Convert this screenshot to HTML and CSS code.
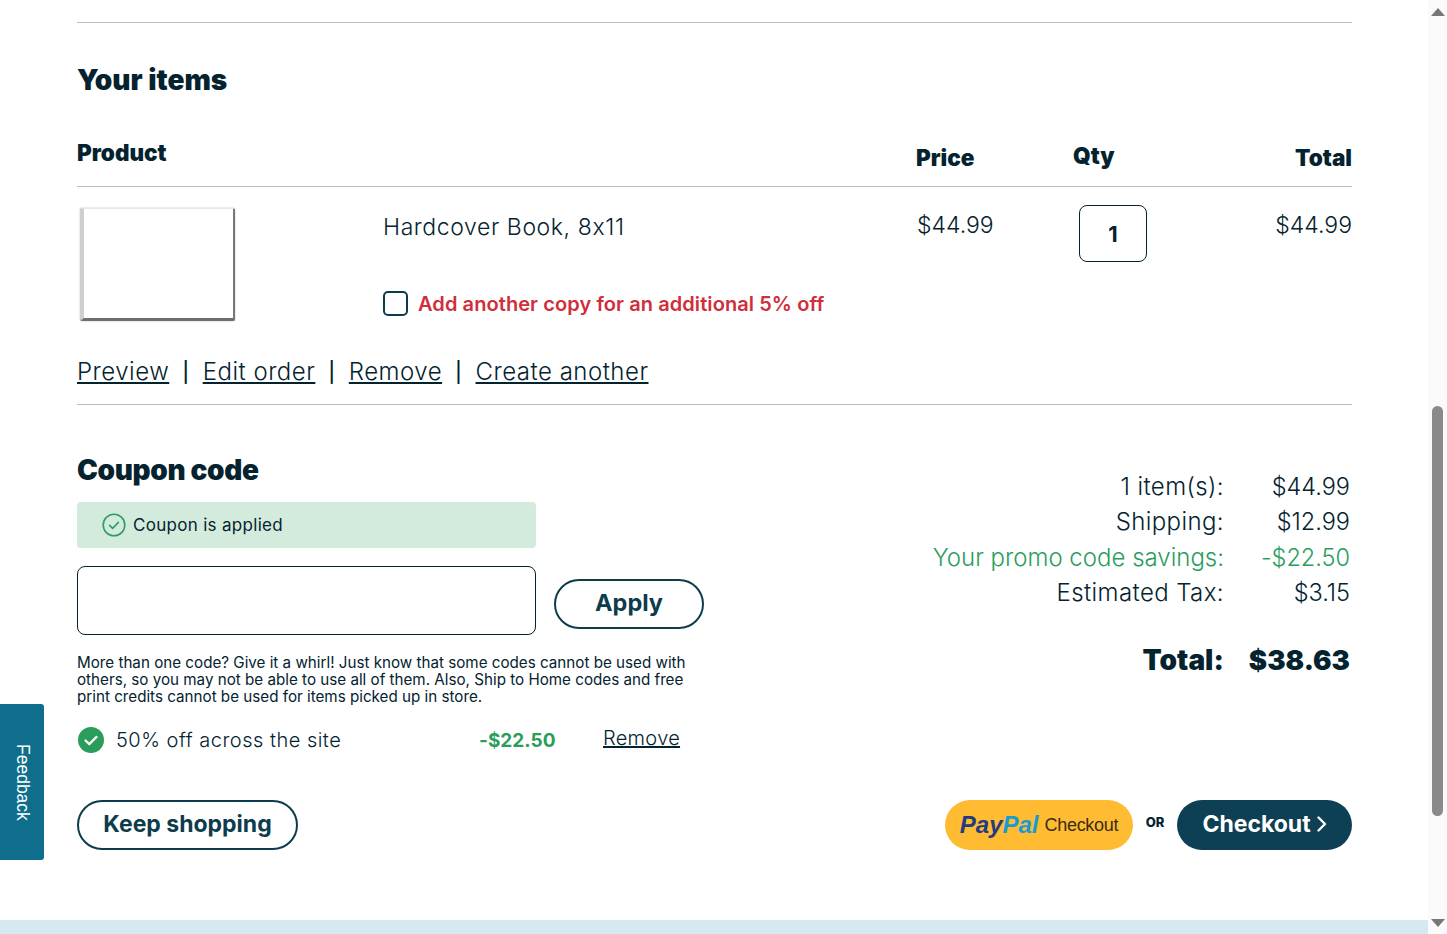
FILE: index.html
```html
<!DOCTYPE html>
<html lang="en">
<head>
    <meta charset="UTF-8">
    <meta name="viewport" content="width=device-width, initial-scale=1.0">
    <title>Your cart</title>
    <link rel="stylesheet" href="styles.css">
</head>
<body>
    <div class="page">
        <div class="content">
            <h2 class="items-title">Your items</h2>
            <div class="table-head">
                <div class="head-product">Product</div>
                <div class="head-price">Price</div>
                <div class="head-qty">Qty</div>
                <div class="head-total">Total</div>
            </div>
            <div class="item">
                <div class="item-image"></div>
                <div class="item-info">
                    <div class="item-name">Hardcover Book, 8x11</div>
                    <label class="upsell"><span class="checkbox"></span><span class="upsell-text">Add another copy for an additional 5% off</span></label>
                </div>
                <div class="item-price">$44.99</div>
                <div class="item-qty"><div class="qty-box">1</div></div>
                <div class="item-total">$44.99</div>
            </div>
            <div class="item-links">
                <a href="#">Preview</a><span class="sep">|</span><a href="#">Edit order</a><span class="sep">|</span><a href="#">Remove</a><span class="sep">|</span><a href="#">Create another</a>
            </div>
            <div class="summary">
                <div class="coupon">
                    <h2 class="coupon-title">Coupon code</h2>
                    <div class="coupon-alert">
                        <svg class="alert-icon" viewBox="0 0 24 24" width="24" height="24"><circle cx="12" cy="12" r="10.8" fill="none" stroke="#2f9e63" stroke-width="1.6"/><path d="M7.6 12.4l3 3 5.8-6" fill="none" stroke="#2f9e63" stroke-width="1.6" stroke-linecap="round" stroke-linejoin="round"/></svg>
                        Coupon is applied
                    </div>
                    <div class="coupon-form">
                        <div class="coupon-input"></div>
                        <button class="btn btn-outline btn-apply">Apply</button>
                    </div>
                    <p class="coupon-help">More than one code? Give it a whirl! Just know that some codes cannot be used with others, so you may not be able to use all of them. Also, Ship to Home codes and free print credits cannot be used for items picked up in store.</p>
                    <div class="applied">
                        <svg class="applied-icon" viewBox="0 0 26 26" width="26" height="26"><circle cx="13" cy="13" r="13" fill="#2a9d5c"/><path d="M7.5 13.5l3.8 3.6 7.2-7.2" fill="none" stroke="#fff" stroke-width="2.2" stroke-linecap="round" stroke-linejoin="round"/></svg>
                        <span class="applied-name">50% off across the site</span>
                        <span class="applied-amount">-$22.50</span>
                        <a class="applied-remove" href="#">Remove</a>
                    </div>
                </div>
                <div class="totals">
                    <div class="total-row"><span>1 item(s):</span><span class="amount">$44.99</span></div>
                    <div class="total-row"><span>Shipping:</span><span class="amount">$12.99</span></div>
                    <div class="total-row promo"><span>Your promo code savings:</span><span class="amount">-$22.50</span></div>
                    <div class="total-row"><span>Estimated Tax:</span><span class="amount">$3.15</span></div>
                    <div class="total-row grand"><span>Total:</span><span class="amount-grand">$38.63</span></div>
                </div>
            </div>
            <div class="actions">
                <button class="btn btn-outline btn-keep">Keep shopping</button>
                <div class="checkout-group">
                    <button class="btn-paypal"><span class="pp-dark">Pay</span><span class="pp-light">Pal</span><span class="pp-label">Checkout</span></button>
                    <span class="or">OR</span>
                    <button class="btn btn-checkout">Checkout<svg viewBox="0 0 10 16" width="10" height="16"><path d="M1.5 1.5L8 8l-6.5 6.5" fill="none" stroke="#fff" stroke-width="2.4" stroke-linecap="round" stroke-linejoin="round"/></svg></button>
                </div>
            </div>
        </div>
        <div class="footer-band"></div>
    </div>
    <div class="scrollbar">
        <svg class="arrow" viewBox="0 0 14 8" width="14" height="8"><path d="M7 0l7 8H0z" fill="#777"/></svg>
        <div class="track"><div class="thumb"></div></div>
        <svg class="arrow" viewBox="0 0 14 8" width="14" height="8"><path d="M0 0h14L7 8z" fill="#777"/></svg>
    </div>
    <div class="feedback">Feedback</div>
</body>
</html>
```

FILE: styles.css
```css
* {
    margin: 0;
    padding: 0;
    box-sizing: border-box;
}
body {
    display: flex;
    height: 100vh;
    overflow: hidden;
    background-color: #fff;
    color: #04232f;
    font-family: Inter, "Liberation Sans", sans-serif;
    font-feature-settings: "calt" 0;
}
button {
    font-family: inherit;
    font-feature-settings: inherit;
    cursor: pointer;
}
a {
    color: inherit;
}
.page {
    flex: 1;
    display: flex;
    flex-direction: column;
    justify-content: space-between;
}
.content {
    margin: 22px 76px 0 77px;
    border-top: 1px solid #bdbdbd;
}
.footer-band {
    height: 14px;
    background: #d6e9f0;
}
.items-title {
    margin-top: 38px;
    font-size: 28px;
    line-height: 38px;
    font-weight: 900;
}
.table-head {
    display: grid;
    grid-template-columns: 839px 157px 120px 1fr;
    height: 69px;
    margin-top: 19px;
    border-bottom: 1px solid #bdbdbd;
    font-size: 22.5px;
    line-height: 29px;
    font-weight: 900;
}
.head-product {
    padding-top: 20px;
}
.head-price {
    padding-top: 25px;
}
.head-qty {
    padding-top: 23px;
}
.head-total {
    padding-top: 25px;
    text-align: right;
}
.item {
    display: grid;
    grid-template-columns: 306px 534px 162px 70px 1fr;
    padding-top: 18px;
    height: 163px;
}
.item-image {
    width: 155px;
    height: 113px;
    margin: 3px 0 0 3px;
    background: #fff;
    border-top: 1px solid #e8e8e8;
    border-left: 4px solid #cfcfcf;
    border-right: 2px solid #777;
    border-bottom: 3px solid #6e6e6e;
    border-radius: 2px;
    box-shadow: 0 0 2px #bbb;
}
.item-name {
    font-size: 23px;
    line-height: 44px;
    font-weight: 300;
    letter-spacing: 0.6px;
}
.upsell {
    display: flex;
    align-items: center;
    gap: 10px;
    margin-top: 41px;
    color: #cf2e3a;
    font-size: 20px;
    font-weight: 600;
    letter-spacing: 0.08px;
}
.upsell-text {
    padding-top: 2px;
}
.checkbox {
    width: 25px;
    height: 25px;
    border: 2px solid #0d3c4c;
    border-radius: 5px;
}
.item-price {
    font-size: 23px;
    line-height: 40px;
    font-weight: 300;
}
.item-qty {
    display: flex;
}
.qty-box {
    width: 68px;
    height: 57px;
    display: flex;
    align-items: center;
    justify-content: center;
    border: 1px solid #04232f;
    border-radius: 8px;
    font-size: 22px;
    font-weight: 700;
}
.item-total {
    font-size: 23px;
    line-height: 40px;
    font-weight: 300;
    text-align: right;
}
.item-links {
    display: flex;
    gap: 13px;
    height: 55px;
    padding-top: 4px;
    border-bottom: 1px solid #bdbdbd;
    font-size: 24px;
    line-height: 36px;
    font-weight: 300;
    letter-spacing: 0.5px;
}
.sep {
    font-size: 20px;
    font-weight: 500;
}
.summary {
    display: flex;
    justify-content: space-between;
    padding-top: 45px;
}
.coupon {
    width: 627px;
}
.coupon-title {
    margin-top: 1px;
    margin-bottom: -1px;
    font-size: 28px;
    line-height: 38px;
    font-weight: 900;
    letter-spacing: -0.35px;
}
.coupon-alert {
    display: flex;
    align-items: center;
    gap: 7px;
    width: 459px;
    height: 46px;
    margin-top: 14px;
    padding-left: 25px;
    background: #d3ebdd;
    border-radius: 4px;
    font-size: 17px;
    letter-spacing: 0.3px;
}
.coupon-form {
    display: flex;
    gap: 18px;
    margin-top: 18px;
}
.coupon-input {
    width: 459px;
    height: 69px;
    border: 1px solid #04232f;
    border-radius: 8px;
}
.btn {
    border-radius: 25px;
    font-weight: 700;
}
.btn-outline {
    background: #fff;
    border: 2px solid #0d3c4c;
    color: #0d3c4c;
}
.btn-apply {
    width: 150px;
    height: 50px;
    margin-top: 13px;
    padding-bottom: 4px;
    font-size: 23.5px;
}
.coupon-help {
    margin-top: 19px;
    font-size: 15.2px;
    line-height: 17px;
}
.applied {
    display: flex;
    align-items: center;
    height: 30px;
    margin-top: 20px;
    margin-bottom: -1px;
    font-size: 20px;
    font-weight: 300;
}
.applied-icon {
    margin-left: 1px;
}
.applied-name {
    width: 363px;
    margin-left: 12px;
    letter-spacing: 0.5px;
}
.applied-amount {
    width: 124px;
    color: #2a9d5c;
    font-size: 19px;
    font-weight: 700;
}
.applied-remove {
    margin-top: -4px;
    letter-spacing: 0.3px;
}
.totals {
    padding-top: 19px;
    padding-right: 2px;
}
.total-row {
    display: flex;
    justify-content: flex-end;
    height: 35.3px;
    font-size: 24px;
    line-height: 36px;
    font-weight: 300;
    letter-spacing: 0.4px;
}
.amount {
    width: 126px;
    text-align: right;
    font-size: 23.5px;
    letter-spacing: 0;
}
.promo {
    color: #2a9d5c;
    letter-spacing: 0;
}
.grand {
    margin-top: 32px;
    font-size: 28px;
    font-weight: 900;
    letter-spacing: 0;
}
.amount-grand {
    margin-left: 25px;
    font-size: 27.5px;
}
.actions {
    display: flex;
    justify-content: space-between;
    align-items: center;
    margin-top: 46px;
}
.btn-keep {
    width: 221px;
    height: 50px;
    padding-bottom: 2px;
    font-size: 23px;
}
.checkout-group {
    display: flex;
    align-items: center;
}
.btn-paypal {
    display: flex;
    align-items: center;
    justify-content: center;
    width: 188px;
    height: 50px;
    border: none;
    border-radius: 25px;
    background: #ffbc32;
}
.pp-dark,
.pp-light {
    font-family: "Liberation Sans", sans-serif;
    font-size: 24px;
    font-weight: 700;
    font-style: italic;
}
.pp-dark {
    color: #253b80;
}
.pp-light {
    color: #179bd7;
}
.pp-label {
    margin-left: 6px;
    color: #3a2c14;
    font-family: "Liberation Sans", sans-serif;
    font-size: 18px;
    letter-spacing: -0.3px;
}
.or {
    width: 44px;
    margin-top: -6px;
    text-align: center;
    font-size: 13px;
    font-weight: 800;
}
.btn-checkout {
    display: flex;
    align-items: center;
    justify-content: center;
    gap: 6px;
    width: 175px;
    height: 50px;
    padding-bottom: 3px;
    border: none;
    background: #0d3f55;
    color: #fff;
    font-size: 23px;
}
.scrollbar {
    width: 19px;
    display: flex;
    flex-direction: column;
    align-items: center;
    justify-content: space-between;
    padding: 8px 0 7px;
    background: #fafafa;
}
.arrow {
    flex: none;
}
.track {
    flex: 1;
    width: 11px;
}
.thumb {
    width: 11px;
    height: 410px;
    margin-top: 390px;
    border-radius: 6px;
    background: #8a8a8a;
}
.feedback {
    position: fixed;
    left: 0;
    top: 704px;
    width: 44px;
    height: 156px;
    display: flex;
    align-items: center;
    justify-content: center;
    writing-mode: vertical-rl;
    background: #0e6e8c;
    border-radius: 0 3px 3px 0;
    color: #fff;
    font-family: "Liberation Sans", sans-serif;
    font-size: 17.5px;
}
```
